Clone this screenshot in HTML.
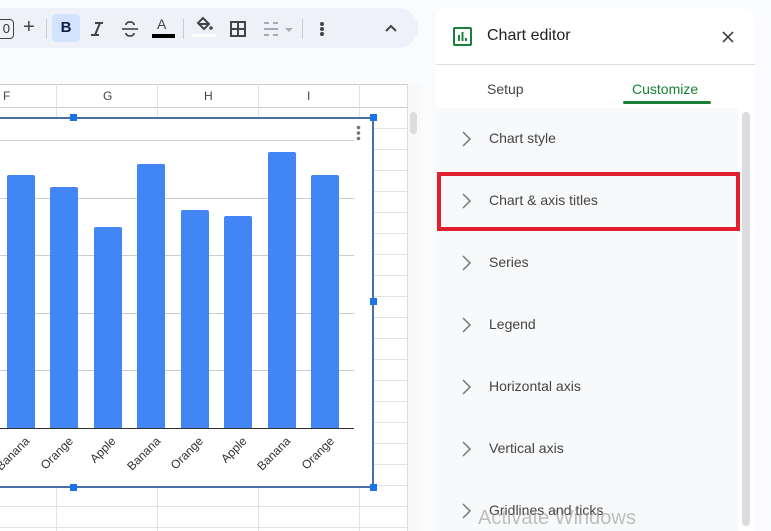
<!DOCTYPE html><html><head><style>
*{margin:0;padding:0;box-sizing:border-box}
body{width:771px;height:531px;overflow:hidden;background:#f9fbfd;font-family:"Liberation Sans",Arial,sans-serif;position:relative}
.a{position:absolute}
.lbl{position:absolute;font-size:12px;color:#333;transform:rotate(-45deg);transform-origin:right center;white-space:nowrap;text-align:right}
.item{position:absolute;left:460px;font-size:14px;color:#444}
.item svg{position:absolute;left:0;top:1px}
.item span{position:absolute;left:29px;white-space:nowrap}
.h{position:absolute;width:7px;height:7px;background:#1a73e8}
</style></head><body>
<!-- toolbar -->
<div class="a" style="left:-20px;top:8px;width:438px;height:40px;background:#eef2f8;border-radius:20px"></div>
<div class="a" style="left:-10px;top:19px;width:24px;height:20px;border:1px solid #444;border-radius:4px;font-size:13px;line-height:18px;text-align:right;padding-right:3px;color:#333">0</div>
<div class="a" style="left:23px;top:16px;font-size:20px;color:#444">+</div>
<div class="a" style="left:46px;top:19px;width:1px;height:20px;background:#ccc"></div>
<div class="a" style="left:52px;top:14px;width:28px;height:28px;background:#d3e3fd;border-radius:4px;font-weight:bold;font-size:15px;color:#0b1f4a;text-align:center;line-height:28px">B</div>
<svg class="a" style="left:90px;top:21px" width="14" height="16"><path d="M5 2h8M1 14h8M10 2L5 14" stroke="#444" stroke-width="2" fill="none"/></svg>
<svg class="a" style="left:121px;top:20px" width="18" height="18"><path d="M1 9h16" stroke="#444" stroke-width="1.6"/><path d="M13 5c0-2-2-3-4-3s-4 1-4 3M5 13c0 2 2 3 4 3s4-1 4-3" stroke="#444" stroke-width="1.8" fill="none"/></svg>
<div class="a" style="left:157px;top:16px;font-size:14px;color:#444">A</div>
<div class="a" style="left:152px;top:34px;width:23px;height:4px;background:#000"></div>
<div class="a" style="left:183px;top:19px;width:1px;height:20px;background:#ccc"></div>
<svg class="a" style="left:194px;top:16px" width="20" height="16"><path d="M4 7l5-5 6 6-5 5z" fill="none" stroke="#444" stroke-width="2"/><path d="M4 8h11" stroke="#444" stroke-width="2"/><circle cx="17" cy="12" r="1.8" fill="#444"/></svg>
<div class="a" style="left:192px;top:34px;width:24px;height:3px;background:#fff"></div>
<svg class="a" style="left:230px;top:21px" width="16" height="16"><rect x="1" y="1" width="14" height="14" fill="none" stroke="#444" stroke-width="2"/><path d="M8 1V15M1 8H15" stroke="#444" stroke-width="2"/></svg>
<svg class="a" style="left:263px;top:21px" width="30" height="16"><path d="M1 2h5M1 14h5M10 2h5M10 14h5M1 8h14" stroke="#aaa" stroke-width="2"/><path d="M22 7l4 4 4-4z" fill="#aaa"/></svg>
<div class="a" style="left:302px;top:19px;width:1px;height:20px;background:#ccc"></div>
<svg class="a" style="left:320px;top:21px" width="4" height="16"><circle cx="2" cy="3" r="2" fill="#444"/><circle cx="2" cy="8" r="2" fill="#444"/><circle cx="2" cy="13" r="2" fill="#444"/></svg>
<svg class="a" style="left:385px;top:24px" width="12" height="8"><path d="M1 7l5-5 5 5" fill="none" stroke="#444" stroke-width="2"/></svg>
<!-- grid -->
<div class="a" style="left:0;top:84px;width:407px;height:447px;background:#fff"></div>
<div class="a" style="left:0;top:84px;width:407px;height:24px;background:#fff;border-top:1px solid #ccc;border-bottom:1px solid #ccc"></div>
<div class="a" style="left:0;top:108px;width:407px;height:423px;background:repeating-linear-gradient(#fff 0 20px,#e2e2e2 20px 21px)"></div>
<div class="a" style="left:56px;top:84px;width:1px;height:447px;background:#e2e2e2"></div>
<div class="a" style="left:157px;top:84px;width:1px;height:447px;background:#e2e2e2"></div>
<div class="a" style="left:258px;top:84px;width:1px;height:447px;background:#e2e2e2"></div>
<div class="a" style="left:359px;top:84px;width:1px;height:447px;background:#e2e2e2"></div>
<div class="a" style="left:3px;top:89px;font-size:12px;color:#444">F</div>
<div class="a" style="left:103px;top:89px;font-size:12px;color:#444">G</div>
<div class="a" style="left:204px;top:89px;font-size:12px;color:#444">H</div>
<div class="a" style="left:307px;top:89px;font-size:12px;color:#444">I</div>
<div class="a" style="left:407px;top:84px;width:13px;height:447px;background:#f8f8f8;border-left:1px solid #ddd"></div>
<div class="a" style="left:410px;top:112px;width:7px;height:22px;background:#ddd;border-radius:4px"></div>
<!-- chart -->
<div class="a" style="left:-2px;top:117px;width:376px;height:371px;background:#fff;border:2px solid #4a6fa5"></div>
<div class="a" style="left:0;top:140px;width:354px;height:1px;background:#ccc"></div>
<div class="a" style="left:0;top:198px;width:354px;height:1px;background:#ccc"></div>
<div class="a" style="left:0;top:255px;width:354px;height:1px;background:#ccc"></div>
<div class="a" style="left:0;top:313px;width:354px;height:1px;background:#ccc"></div>
<div class="a" style="left:0;top:370px;width:354px;height:1px;background:#ccc"></div>
<div class="a" style="left:0;top:428px;width:354px;height:1px;background:#333"></div>
<svg class="a" style="left:356px;top:125px" width="5" height="16"><circle cx="2.5" cy="2.5" r="1.8" fill="#777"/><circle cx="2.5" cy="8" r="1.8" fill="#777"/><circle cx="2.5" cy="13.5" r="1.8" fill="#777"/></svg>
<div class="a" style="left:7px;top:175px;width:28px;height:253px;background:#4285f4;border-radius:2px 2px 0 0"></div>
<div class="a" style="left:50px;top:187px;width:28px;height:241px;background:#4285f4;border-radius:2px 2px 0 0"></div>
<div class="a" style="left:94px;top:227px;width:28px;height:201px;background:#4285f4;border-radius:2px 2px 0 0"></div>
<div class="a" style="left:137px;top:164px;width:28px;height:264px;background:#4285f4;border-radius:2px 2px 0 0"></div>
<div class="a" style="left:181px;top:210px;width:28px;height:218px;background:#4285f4;border-radius:2px 2px 0 0"></div>
<div class="a" style="left:224px;top:216px;width:28px;height:212px;background:#4285f4;border-radius:2px 2px 0 0"></div>
<div class="a" style="left:268px;top:152px;width:28px;height:276px;background:#4285f4;border-radius:2px 2px 0 0"></div>
<div class="a" style="left:311px;top:175px;width:28px;height:253px;background:#4285f4;border-radius:2px 2px 0 0"></div>
<div class="lbl" style="right:calc(771px - 27px);top:432px">Banana</div>
<div class="lbl" style="right:calc(771px - 71px);top:432px">Orange</div>
<div class="lbl" style="right:calc(771px - 114px);top:432px">Apple</div>
<div class="lbl" style="right:calc(771px - 158px);top:432px">Banana</div>
<div class="lbl" style="right:calc(771px - 201px);top:432px">Orange</div>
<div class="lbl" style="right:calc(771px - 245px);top:432px">Apple</div>
<div class="lbl" style="right:calc(771px - 288px);top:432px">Banana</div>
<div class="lbl" style="right:calc(771px - 332px);top:432px">Orange</div>
<div class="h" style="left:70px;top:114px"></div><div class="h" style="left:370px;top:114px"></div>
<div class="h" style="left:370px;top:298px"></div>
<div class="h" style="left:70px;top:484px"></div><div class="h" style="left:370px;top:484px"></div>
<!-- editor -->
<div class="a" style="left:436px;top:8px;width:319px;height:523px;background:#fff;border-radius:12px 12px 0 0"></div>
<svg class="a" style="left:453px;top:27px" width="20" height="20"><rect x="1" y="1" width="17" height="17" fill="none" stroke="#188038" stroke-width="2" rx="1"/><path d="M6 8v6M9.5 5v9M13 11v3" stroke="#188038" stroke-width="2"/></svg>
<div class="a" style="left:487px;top:27px;font-size:16px;color:#222">Chart editor</div>
<svg class="a" style="left:722px;top:31px" width="12" height="12"><path d="M1 1l10 10M11 1L1 11" stroke="#444" stroke-width="1.6"/></svg>
<div class="a" style="left:436px;top:64px;width:319px;height:1px;background:#ddd"></div>
<div class="a" style="left:487px;top:81px;font-size:14px;color:#444">Setup</div>
<div class="a" style="left:632px;top:81px;font-size:14px;color:#188038">Customize</div>
<div class="a" style="left:623px;top:101px;width:88px;height:3px;background:#188038;border-radius:2px"></div>
<div class="a" style="left:434px;top:108px;width:304px;height:423px;background:#f8f9fa"></div>
<div class="a" style="left:742px;top:112px;width:8px;height:414px;background:#dadce0;border-radius:4px"></div>
<div class="a" style="left:437px;top:172px;width:303px;height:59px;border:4px solid #e0202e"></div>
<div class="item" style="top:130px"><svg width="12" height="16"><path d="M3 1l7 7-7 7" fill="none" stroke="#777" stroke-width="1.5"/></svg><span>Chart style</span></div>
<div class="item" style="top:192px"><svg width="12" height="16"><path d="M3 1l7 7-7 7" fill="none" stroke="#777" stroke-width="1.5"/></svg><span>Chart &amp; axis titles</span></div>
<div class="item" style="top:254px"><svg width="12" height="16"><path d="M3 1l7 7-7 7" fill="none" stroke="#777" stroke-width="1.5"/></svg><span>Series</span></div>
<div class="item" style="top:316px"><svg width="12" height="16"><path d="M3 1l7 7-7 7" fill="none" stroke="#777" stroke-width="1.5"/></svg><span>Legend</span></div>
<div class="item" style="top:378px"><svg width="12" height="16"><path d="M3 1l7 7-7 7" fill="none" stroke="#777" stroke-width="1.5"/></svg><span>Horizontal axis</span></div>
<div class="item" style="top:440px"><svg width="12" height="16"><path d="M3 1l7 7-7 7" fill="none" stroke="#777" stroke-width="1.5"/></svg><span>Vertical axis</span></div>
<div class="item" style="top:502px"><svg width="12" height="16"><path d="M3 1l7 7-7 7" fill="none" stroke="#777" stroke-width="1.5"/></svg><span>Gridlines and ticks</span></div>
<div class="a" style="left:478px;top:507px;font-size:20px;color:rgba(150,150,150,.6)">Activate Windows</div>
</body></html>
